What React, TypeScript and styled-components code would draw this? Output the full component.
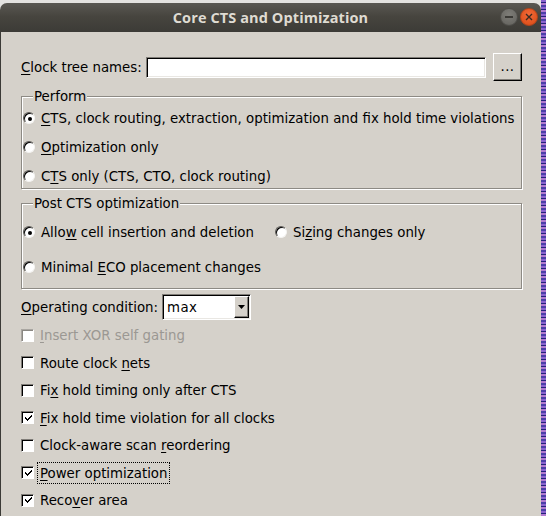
import React from 'react';
import styled, { createGlobalStyle } from 'styled-components';

const Global = createGlobalStyle`
  html, body { margin: 0; padding: 0; }
  body {
    width: 546px;
    height: 516px;
    overflow: hidden;
    background: repeating-linear-gradient(180deg, #8a63cf 0 2px, #23237a 2px 3px, #b27ad0 3px 5px, #4b3fa8 5px 7px);
    font-family: "DejaVu Sans", "Liberation Sans", sans-serif;
  }
`;

const Screen = styled.div`
  display: flex;
  width: 546px;
  height: 516px;
`;

const Window = styled.div`
  width: 541px;
  height: 516px;
  display: flex;
  flex-direction: column;
  padding-top: 3px;
  box-sizing: border-box;
  background: #e4e3e1;
`;

const TitleBar = styled.div`
  position: relative;
  height: 29px;
  flex: none;
  border-radius: 7px 7px 0 0;
  background: linear-gradient(180deg, #5a5853 0%, #47453f 45%, #3c3b37 100%);
  display: flex;
  align-items: center;
  justify-content: center;
`;

const Title = styled.span`
  font-family: "Open Sans", "DejaVu Sans", sans-serif;
  font-weight: 700;
  font-size: 14.5px;
  color: #dfdbd2;
  letter-spacing: 0.1px;
`;

const WinControls = styled.div`
  position: absolute;
  right: 3px;
  top: 5px;
  display: flex;
  gap: 2px;
`;

const WinBtn = styled.div<{ $kind: 'min' | 'close' }>`
  width: 18px;
  height: 18px;
  border-radius: 50%;
  box-sizing: border-box;
  display: flex;
  align-items: center;
  justify-content: center;
  background: ${(p) =>
    p.$kind === 'close'
      ? 'radial-gradient(circle at 50% 35%, #f26a38 0%, #e0531f 70%, #c8461a 100%)'
      : 'radial-gradient(circle at 50% 35%, #7e7d78 0%, #6a6964 70%, #5a5955 100%)'};
  border: 1px solid ${(p) => (p.$kind === 'close' ? '#b3441b' : '#4e4d49')};
`;

const Content = styled.div`
  flex: 1;
  background: #d5d1ca;
  border-left: 1px solid #3b3a36;
  padding: 21px 19px 0 20px;
  display: flex;
  flex-direction: column;
  color: #000;
  font-size: 13.33px;
  line-height: 16px;
`;

const Mn = styled.span`
  text-decoration: underline;
  text-underline-offset: 2px;
  text-decoration-thickness: 1px;
`;

const ClockRow = styled.div`
  display: flex;
  align-items: center;
  height: 28px;
`;

const Label = styled.span`
  white-space: nowrap;
  padding-top: 2px;
`;

const Entry = styled.div`
  flex: 1;
  height: 21px;
  margin-left: 4px;
  box-sizing: border-box;
  background: #fff;
  border: 1px solid;
  border-color: #7f7c77 #fff #fff #7f7c77;
  box-shadow: inset 1px 1px 0 #000, inset -1px -1px 0 #e9e7e3;
`;

const Button = styled.div`
  width: 29px;
  height: 28px;
  margin-left: 7px;
  box-sizing: border-box;
  border: 1px solid;
  border-color: #fff #000 #000 #fff;
  box-shadow: inset -1px -1px 0 #7f7c77;
  display: flex;
  align-items: center;
  justify-content: center;
  padding-bottom: 1px;
  font-size: 13.33px;
  letter-spacing: 0.5px;
`;

const Group = styled.div<{ $top: number; $padBottom: number }>`
  margin-top: ${(p) => p.$top}px;
  border: 1px solid #8d8a84;
  box-shadow: inset 1px 1px 0 #fff, 1px 1px 0 #fff;
  padding: 0 0 ${(p) => p.$padBottom}px 1px;
  display: flex;
  flex-direction: column;
`;

const Legend = styled.div`
  align-self: flex-start;
  margin: -9px 0 0 10px;
  padding: 1px 1px 0;
  background: #d5d1ca;
  line-height: 16px;
`;

const RadioRow = styled.div<{ $top: number }>`
  display: flex;
  align-items: center;
  height: 20px;
  margin-top: ${(p) => p.$top}px;
`;

const RadioGrid = styled.div<{ $top: number }>`
  display: grid;
  grid-template-columns: 252px auto;
  align-items: center;
  height: 20px;
  margin-top: ${(p) => p.$top}px;
`;

const RadioItem = styled.div`
  display: flex;
  align-items: center;
  gap: 6px;
  white-space: nowrap;
`;

const RadioText = styled.span`
  padding-top: 2px;
`;

const RadioCircle = styled.div<{ $on?: boolean }>`
  width: 12px;
  height: 12px;
  box-sizing: border-box;
  border-radius: 50%;
  border: 1px solid;
  border-color: #5c5a56 #f4f3f1 #f4f3f1 #5c5a56;
  background: #fff;
  box-shadow: inset 1px 1px 0 #000;
  display: flex;
  align-items: center;
  justify-content: center;
  flex: none;
  &::after {
    content: '';
    width: 4px;
    height: 4px;
    border-radius: 50%;
    margin: 1px 0 0 1px;
    background: ${(p) => (p.$on ? '#000' : 'transparent')};
  }
`;

const OpRow = styled.div`
  display: flex;
  align-items: center;
  margin-top: 5px;
  height: 26px;
`;

const Combo = styled.div`
  width: 89px;
  height: 26px;
  margin-left: 4px;
  box-sizing: border-box;
  background: #fff;
  border: 1px solid;
  border-color: #7f7c77 #fff #fff #7f7c77;
  box-shadow: inset 1px 1px 0 #000, inset -1px -1px 0 #e9e7e3;
  display: flex;
  align-items: stretch;
  padding: 1px;
`;

const ComboText = styled.span`
  flex: 1;
  padding: 2px 0 0 3px;
  display: flex;
  align-items: center;
  letter-spacing: 0.4px;
`;

const ComboArrow = styled.div`
  width: 15px;
  box-sizing: border-box;
  background: #d5d1ca;
  border: 1px solid;
  border-color: #fff #000 #000 #fff;
  box-shadow: inset -1px -1px 0 #7f7c77;
  display: flex;
  align-items: center;
  justify-content: center;
`;

const CheckList = styled.div`
  display: flex;
  flex-direction: column;
  margin-top: 4px;
  gap: 5.5px;
`;

const CheckRow = styled.div<{ $disabled?: boolean }>`
  display: flex;
  align-items: center;
  height: 22px;
  color: ${(p) => (p.$disabled ? '#9b9893' : '#000')};
`;

const CheckBox = styled.div<{ $disabled?: boolean }>`
  width: 13px;
  height: 13px;
  box-sizing: border-box;
  flex: none;
  background: #fff;
  border: 1px solid;
  border-color: ${(p) => (p.$disabled ? '#a9a6a1 #fff #fff #a9a6a1' : '#7f7c77 #fff #fff #7f7c77')};
  box-shadow: inset 1px 1px 0 ${(p) => (p.$disabled ? '#8a8782' : '#000')};
  display: flex;
  align-items: center;
  justify-content: center;
  padding: 1px 0 0 1px;
`;

const CheckLabel = styled.span<{ $focus?: boolean }>`
  margin-left: 3px;
  padding: 3px 2px 1px;
  border: 1px dotted ${(p) => (p.$focus ? '#000' : 'transparent')};
  white-space: nowrap;
`;

const Check = () => (
  <svg width="9" height="9" viewBox="0 0 9 9" shapeRendering="crispEdges">
    <path d="M1 3h1v1h1v1h1V4h1V3h1V2h1V1h1v2h-1v1h-1v1h-1v1h-1v1h-1V6h-1V5H1z" fill="#000" />
  </svg>
);

const checks: { label: React.ReactNode; on?: boolean; disabled?: boolean; focus?: boolean }[] = [
  { label: <><Mn>I</Mn>nsert XOR self gating</>, disabled: true },
  { label: <>Route clock <Mn>n</Mn>ets</> },
  { label: <>Fi<Mn>x</Mn> hold timing only after CTS</> },
  { label: <><Mn>F</Mn>ix hold time violation for all clocks</>, on: true },
  { label: <>Clock-aware scan <Mn>r</Mn>eordering</> },
  { label: <><Mn>P</Mn>ower optimization</>, on: true, focus: true },
  { label: <>Reco<Mn>v</Mn>er area</>, on: true },
];

export default function App() {
  return (
    <>
      <Global />
      <Screen>
        <Window>
          <TitleBar>
            <Title>Core CTS and Optimization</Title>
            <WinControls>
              <WinBtn $kind="min">
                <svg width="8" height="8" viewBox="0 0 8 8">
                  <rect x="0" y="3" width="8" height="2" fill="#3b3a36" />
                </svg>
              </WinBtn>
              <WinBtn $kind="close">
                <svg width="8" height="8" viewBox="0 0 8 8">
                  <path d="M1 1L7 7M7 1L1 7" stroke="#3a2a22" strokeWidth="1.4" />
                </svg>
              </WinBtn>
            </WinControls>
          </TitleBar>
          <Content>
            <ClockRow>
              <Label>
                <Mn>C</Mn>lock tree names:
              </Label>
              <Entry />
              <Button>...</Button>
            </ClockRow>

            <Group $top={15} $padBottom={2}>
              <Legend>Perform</Legend>
              <RadioRow $top={3}>
                <RadioItem>
                  <RadioCircle $on />
                  <RadioText>
                    <Mn>C</Mn>TS, clock routing, extraction, optimization and fix hold time violations
                  </RadioText>
                </RadioItem>
              </RadioRow>
              <RadioRow $top={9}>
                <RadioItem>
                  <RadioCircle />
                  <RadioText>
                    <Mn>O</Mn>ptimization only
                  </RadioText>
                </RadioItem>
              </RadioRow>
              <RadioRow $top={9}>
                <RadioItem>
                  <RadioCircle />
                  <RadioText>
                    C<Mn>T</Mn>S only (CTS, CTO, clock routing)
                  </RadioText>
                </RadioItem>
              </RadioRow>
            </Group>

            <Group $top={14} $padBottom={11}>
              <Legend>Post CTS optimization</Legend>
              <RadioGrid $top={10}>
                <RadioItem>
                  <RadioCircle $on />
                  <RadioText>
                    Allo<Mn>w</Mn> cell insertion and deletion
                  </RadioText>
                </RadioItem>
                <RadioItem>
                  <RadioCircle />
                  <RadioText>
                    Si<Mn>z</Mn>ing changes only
                  </RadioText>
                </RadioItem>
              </RadioGrid>
              <RadioRow $top={15}>
                <RadioItem>
                  <RadioCircle />
                  <RadioText>
                    Minimal <Mn>E</Mn>CO placement changes
                  </RadioText>
                </RadioItem>
              </RadioRow>
            </Group>

            <OpRow>
              <Label>
                <Mn>O</Mn>perating condition:
              </Label>
              <Combo>
                <ComboText>max</ComboText>
                <ComboArrow>
                  <svg width="7" height="4" viewBox="0 0 7 4">
                    <path d="M0 0H7L3.5 4Z" fill="#000" />
                  </svg>
                </ComboArrow>
              </Combo>
            </OpRow>

            <CheckList>
              {checks.map((c, i) => (
                <CheckRow key={i} $disabled={c.disabled}>
                  <CheckBox $disabled={c.disabled}>{c.on ? <Check /> : null}</CheckBox>
                  <CheckLabel $focus={c.focus}>{c.label}</CheckLabel>
                </CheckRow>
              ))}
            </CheckList>
          </Content>
        </Window>
      </Screen>
    </>
  );
}
